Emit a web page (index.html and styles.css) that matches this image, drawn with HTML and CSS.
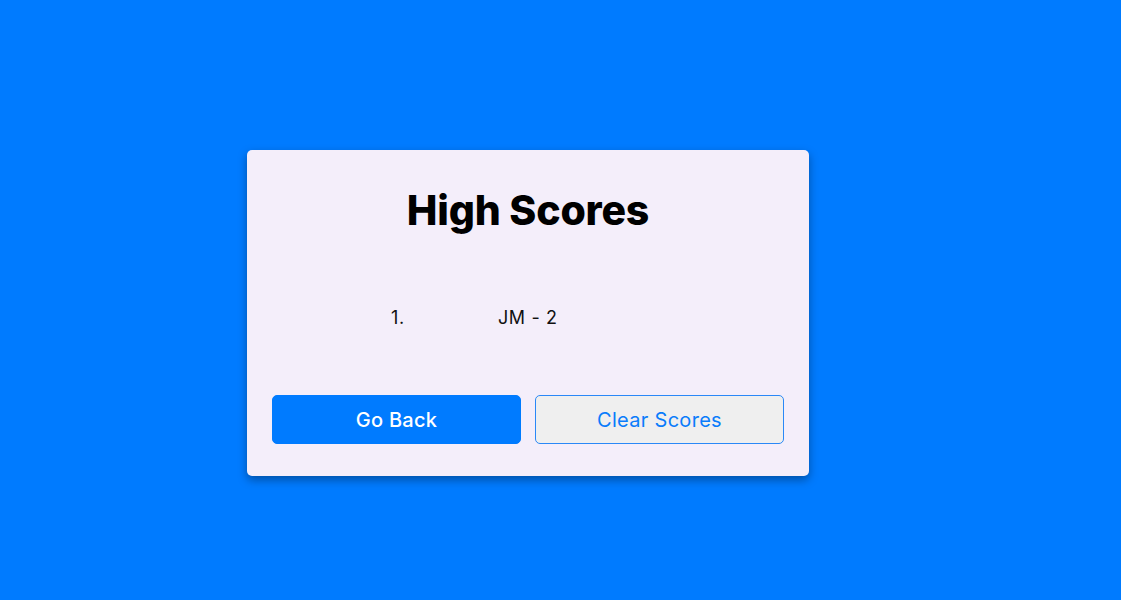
FILE: index.html
```html
<!DOCTYPE html>
<html>
<head>
<meta charset="utf-8">
<link rel="stylesheet" href="styles.css">
</head>
<body>
<main class="page">
  <section class="card">
    <h1 class="title">High Scores</h1>
    <ol class="scores">
      <li class="score-row"><span class="rank">1.</span><span class="entry">JM - 2</span></li>
    </ol>
    <div class="actions">
      <button class="btn btn-primary">Go Back</button>
      <button class="btn btn-outline">Clear Scores</button>
    </div>
  </section>
</main>
</body>
</html>
```
FILE: styles.css
```css
html, body {
  margin: 0;
  padding: 0;
  height: 100%;
  background: #007bff;
  font-family: "Inter", "Noto Sans", sans-serif;
}
.page {
  padding: 150px 0 0 247px;
}
.card {
  box-sizing: border-box;
  width: 562px;
  height: 326px;
  background: #f4eefa;
  border-radius: 5px;
  box-shadow: 0 4px 10px rgba(0, 0, 0, 0.35);
  padding: 36px 25px 32px;
  display: flex;
  flex-direction: column;
}
.title {
  margin: 0;
  text-align: center;
  font-family: "Inter", sans-serif;
  font-weight: 800;
  font-size: 41px;
  line-height: 48px;
  color: #000;
  letter-spacing: -0.2px;
}
.scores {
  list-style: none;
  margin: 0;
  padding: 0;
  flex: 1;
  display: flex;
  flex-direction: column;
  justify-content: center;
}
.score-row {
  display: flex;
  font-size: 18px;
  color: #111;
  padding-left: 119px;
  margin-top: 6px;
  letter-spacing: 0.6px;
}
.rank {
  width: 107px;
}
.actions {
  display: flex;
  gap: 14px;
}
.btn {
  flex: 1;
  height: 49px;
  border-radius: 5px;
  font-family: "Inter", sans-serif;
  font-size: 20px;
  letter-spacing: 0.3px;
  cursor: pointer;
}
.btn-primary {
  background: #007bff;
  border: 1px solid #007bff;
  color: #fff;
  font-weight: 500;
}
.btn-outline {
  background: #efefef;
  border: 1px solid #2a88f7;
  color: #0a7cfb;
}
```
